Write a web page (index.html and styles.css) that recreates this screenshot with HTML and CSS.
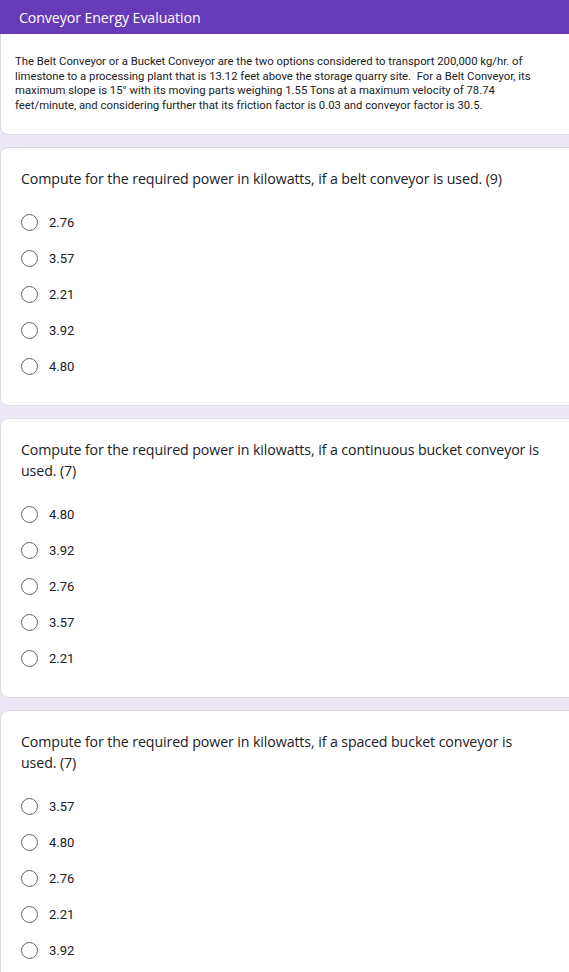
FILE: index.html
```html
<!DOCTYPE html>
<html>
<head>
<meta charset="utf-8">
<link rel="stylesheet" href="styles.css">
</head>
<body>
<div class="header"><span class="title">Conveyor Energy Evaluation</span></div>
<div class="card desc">
  <p>The Belt Conveyor or a Bucket Conveyor are the two options considered to transport 200,000 kg/hr. of limestone to a processing plant that is 13.12 feet above the storage quarry site.&nbsp; For a Belt Conveyor, its maximum slope is 15° with its moving parts weighing 1.55 Tons at a maximum velocity of 78.74 feet/minute, and considering further that its friction factor is 0.03 and conveyor factor is 30.5.</p>
</div>
<div class="card question">
  <div class="qtext">Compute for the required power in kilowatts, if a belt conveyor is used. (9)</div>
  <div class="options">
    <div class="opt"><span class="radio"></span><span class="label">2.76</span></div>
    <div class="opt"><span class="radio"></span><span class="label">3.57</span></div>
    <div class="opt"><span class="radio"></span><span class="label">2.21</span></div>
    <div class="opt"><span class="radio"></span><span class="label">3.92</span></div>
    <div class="opt"><span class="radio"></span><span class="label">4.80</span></div>
  </div>
</div>
<div class="card question">
  <div class="qtext">Compute for the required power in kilowatts, if a continuous bucket conveyor is used. (7)</div>
  <div class="options">
    <div class="opt"><span class="radio"></span><span class="label">4.80</span></div>
    <div class="opt"><span class="radio"></span><span class="label">3.92</span></div>
    <div class="opt"><span class="radio"></span><span class="label">2.76</span></div>
    <div class="opt"><span class="radio"></span><span class="label">3.57</span></div>
    <div class="opt"><span class="radio"></span><span class="label">2.21</span></div>
  </div>
</div>
<div class="card question">
  <div class="qtext">Compute for the required power in kilowatts, if a spaced bucket conveyor is used. (7)</div>
  <div class="options">
    <div class="opt"><span class="radio"></span><span class="label">3.57</span></div>
    <div class="opt"><span class="radio"></span><span class="label">4.80</span></div>
    <div class="opt"><span class="radio"></span><span class="label">2.76</span></div>
    <div class="opt"><span class="radio"></span><span class="label">2.21</span></div>
    <div class="opt"><span class="radio"></span><span class="label">3.92</span></div>
  </div>
</div>
</body>
</html>
```

FILE: styles.css
```css
html, body {
  margin: 0;
  padding: 0;
}
body {
  background: #ede7f6;
  font-family: Roboto, "Liberation Sans", sans-serif;
  color: #202124;
  overflow: hidden;
  width: 569px;
}
.header {
  background: #673ab7;
  height: 34px;
  display: flex;
  align-items: center;
  padding-left: 19px;
}
.title {
  color: #fff;
  font-family: "Open Sans", Roboto, sans-serif;
  font-size: 14.2px;
  letter-spacing: -0.1px;
}
.card {
  background: #fff;
  border: 1px solid #dadce0;
  border-radius: 8px;
  margin-right: -12px;
  margin-bottom: 12px;
}
.desc {
  border-top: none;
  border-radius: 0 0 8px 8px;
  padding: 21px 35px 21px 14px;
}
.desc p {
  margin: 0;
  font-size: 11.3px;
  line-height: 14.5px;
}
.question {
  padding: 20px 33px 21px 20px;
}
.qtext {
  font-family: "Open Sans", Roboto, sans-serif;
  font-size: 14.2px;
  line-height: 21px;
  letter-spacing: -0.1px;
  color: #202124;
}
.options {
  margin-top: 15px;
  display: flex;
  flex-direction: column;
}
.opt {
  height: 36px;
  display: flex;
  align-items: center;
}
.radio {
  width: 15px;
  height: 15px;
  border: 1.5px solid #5f6368;
  border-radius: 50%;
  margin-right: 11px;
  flex: none;
}
.label {
  font-size: 13px;
  color: #202124;
}
```
